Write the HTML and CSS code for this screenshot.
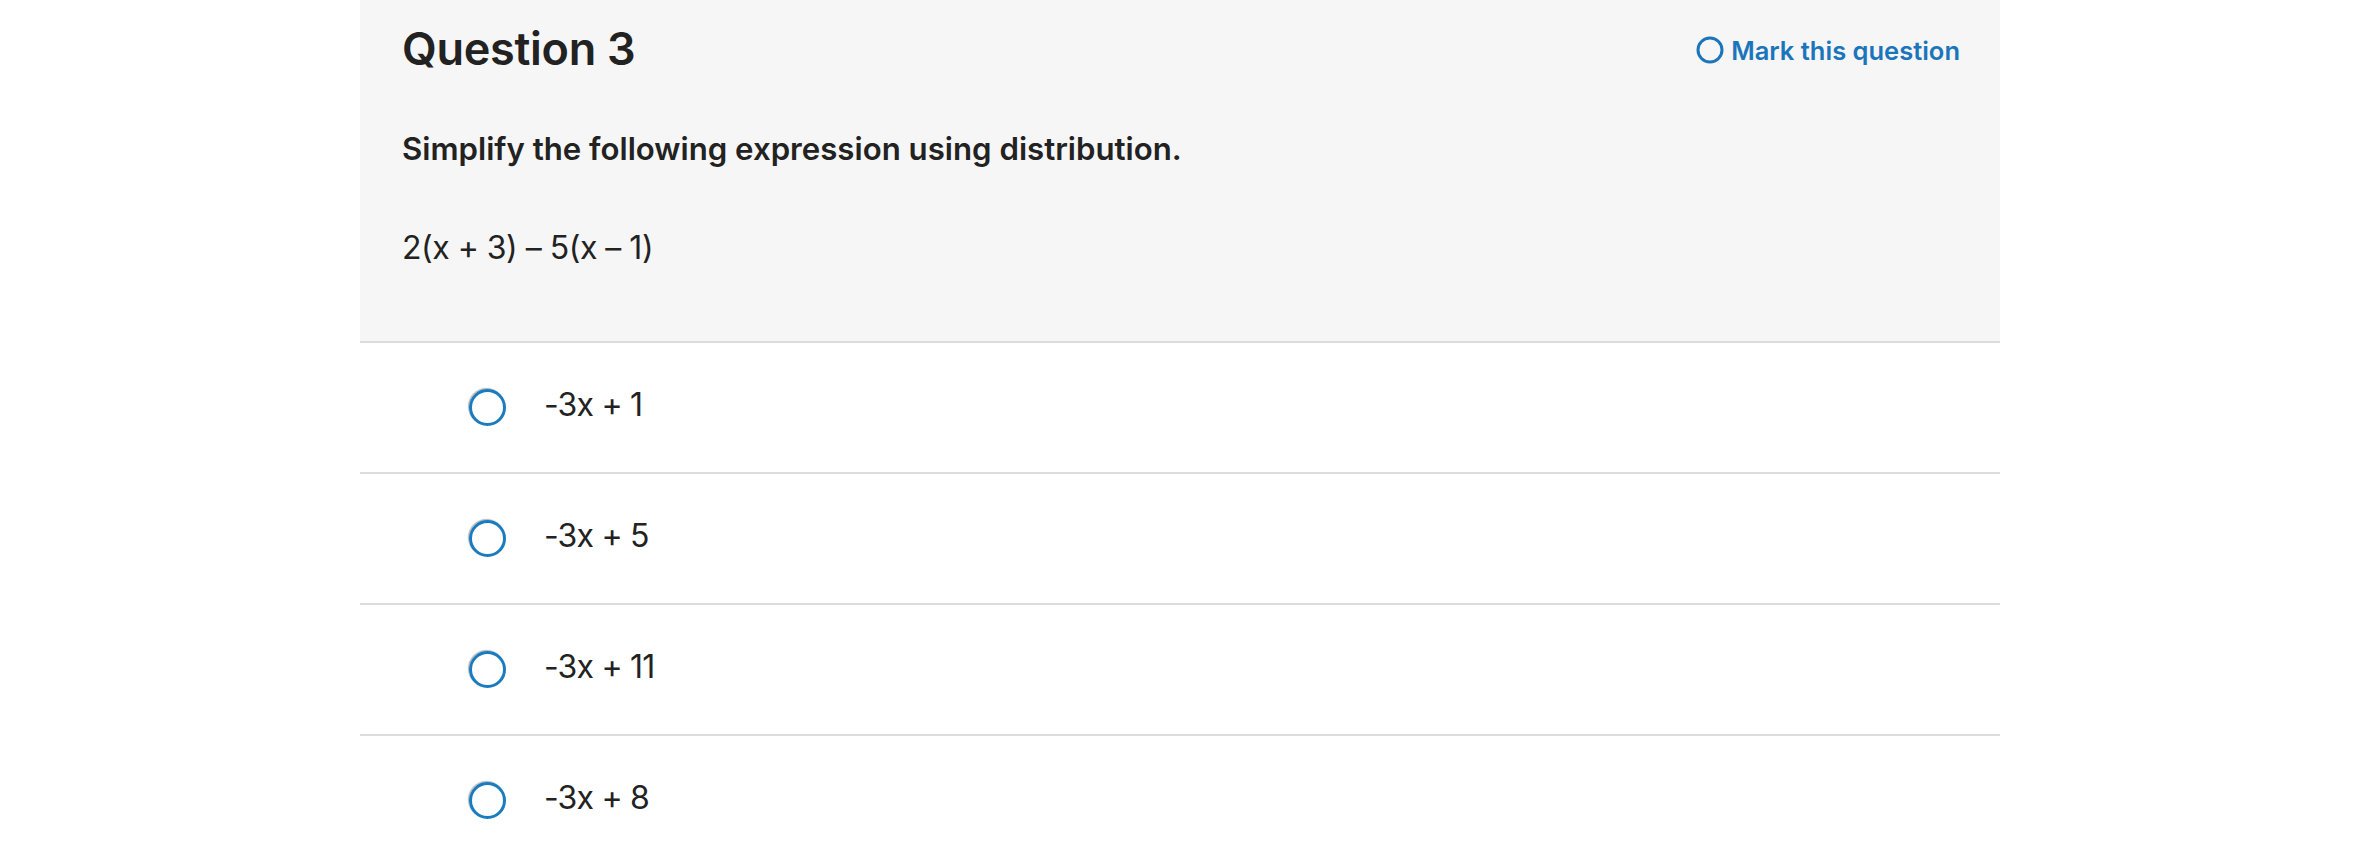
FILE: index.html
```html
<!DOCTYPE html>
<html lang="en">
<head>
<meta charset="utf-8">
<title>Question 3</title>
<link rel="stylesheet" href="styles.css">
</head>
<body>
<main class="question">
  <header class="q-panel">
    <div class="q-top">
      <h2 class="q-title">Question 3</h2>
      <button class="mark" type="button">
        <svg class="mark-icon" width="28" height="28" viewBox="0 0 28 28" aria-hidden="true"><circle cx="14" cy="14" r="12" fill="none" stroke="#1b75bb" stroke-width="3"/></svg>
        <span>Mark this question</span>
      </button>
    </div>
    <p class="prompt">Simplify the following expression using distribution.</p>
    <p class="expr">2(x + 3) – 5(x – 1)</p>
  </header>
  <ul class="answers">
    <li class="answer"><span class="radio"></span><span class="answer-text">-3x + 1</span></li>
    <li class="answer"><span class="radio"></span><span class="answer-text">-3x + 5</span></li>
    <li class="answer"><span class="radio"></span><span class="answer-text">-3x + 11</span></li>
    <li class="answer"><span class="radio"></span><span class="answer-text">-3x + 8</span></li>
  </ul>
</main>
</body>
</html>
```
FILE: styles.css
```css
* { box-sizing: border-box; }
html, body { margin: 0; padding: 0; background: #ffffff; }
body {
  font-family: Inter, Lato, "Liberation Sans", sans-serif;
  color: #222222;
}
.question {
  width: 1640px;
  margin: 0 auto;
}
.q-panel {
  background: #f6f6f6;
  padding: 0 42px 73px 42px;
  border-bottom: 2px solid #dcdcdc;
}
.q-top {
  height: 96px;
  display: flex;
  align-items: center;
  justify-content: space-between;
}
.q-title {
  margin: 0;
  font-size: 45px;
  line-height: 56px;
  font-weight: 600;
  letter-spacing: -0.3px;
  color: #222222;
  margin-top: 2px;
}
.mark {
  display: flex;
  align-items: center;
  gap: 7px;
  background: none;
  border: 0;
  padding: 0;
  margin-top: 4px;
  margin-right: -2px;
  font-family: inherit;
  font-size: 25.5px;
  font-weight: 600;
  color: #1b75bb;
  cursor: pointer;
}
.mark-icon { display: block; }
.prompt {
  margin: 33px 0 0 0;
  font-size: 31.2px;
  line-height: 40px;
  font-weight: 600;
}
.expr {
  margin: 59px 0 0 0;
  font-size: 32px;
  line-height: 40px;
  font-weight: 400;
  letter-spacing: -0.5px;
}
.answers {
  list-style: none;
  margin: 0;
  padding: 0;
}
.answer {
  height: 131px;
  border-bottom: 2px solid #dcdcdc;
  display: flex;
  align-items: center;
  padding-left: 109px;
  gap: 38px;
}
.radio {
  width: 37px;
  height: 37px;
  border-radius: 50%;
  border: 3px solid #1a7bbf;
  box-shadow: -1px -1px 1px rgba(0, 0, 0, 0.3);
  flex: none;
  margin-top: 0;
}
.answer-text {
  font-size: 32px;
  line-height: 40px;
  letter-spacing: -0.8px;
  color: #222222;
  margin-top: -6px;
}
```
